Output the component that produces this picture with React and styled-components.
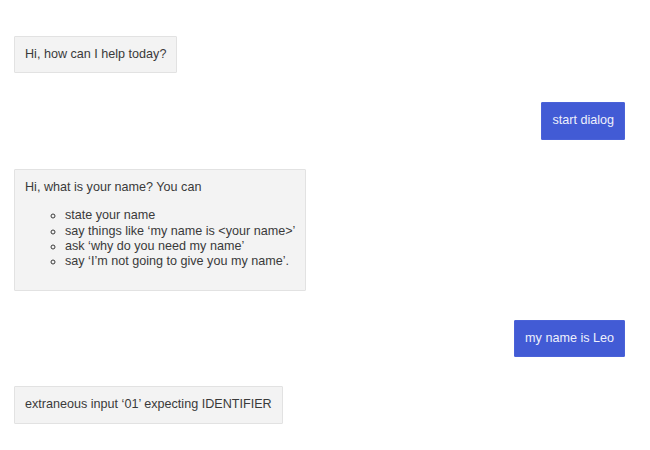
import React from 'react';
import styled, { createGlobalStyle } from 'styled-components';

const GlobalStyle = createGlobalStyle`
  html, body {
    margin: 0;
    padding: 0;
    background: #fff;
  }
  body {
    font-family: 'Liberation Sans', Arial, Helvetica, sans-serif;
  }
`;

const Conversation = styled.div`
  display: flex;
  flex-direction: column;
  gap: 29px;
  padding: 36px 25px 0 14px;
`;

const Bubble = styled.div`
  align-self: ${props => (props.user ? 'flex-end' : 'flex-start')};
  padding: 10px;
  border: 1px solid ${props => (props.user ? '#4a62d8' : '#e2e2e2')};
  background-color: ${props => (props.user ? '#425bd5' : '#f3f3f3')};
  color: ${props => (props.user ? '#eef0fc' : '#3a3a3a')};
  font-size: 12.6px;
  line-height: 15.4px;
  border-radius: 1px;
`;

const Options = styled.ul`
  margin: 13px 0 10px;
  padding-left: 40px;
  list-style: circle;
`;

const messages = [
  { user: false, text: 'Hi, how can I help today?' },
  { user: true, text: 'start dialog' },
  {
    user: false,
    text: 'Hi, what is your name? You can',
    options: [
      'state your name',
      'say things like ‘my name is <your name>’',
      'ask ‘why do you need my name’',
      'say ‘I’m not going to give you my name’.',
    ],
  },
  { user: true, text: 'my name is Leo' },
  { user: false, text: 'extraneous input ‘01’ expecting IDENTIFIER' },
];

export default function App() {
  return (
    <>
      <GlobalStyle />
      <Conversation>
        {messages.map((m, i) => (
          <Bubble key={i} user={m.user}>
            {m.text}
            {m.options && (
              <Options>
                {m.options.map((o, j) => (
                  <li key={j}>{o}</li>
                ))}
              </Options>
            )}
          </Bubble>
        ))}
      </Conversation>
    </>
  );
}
